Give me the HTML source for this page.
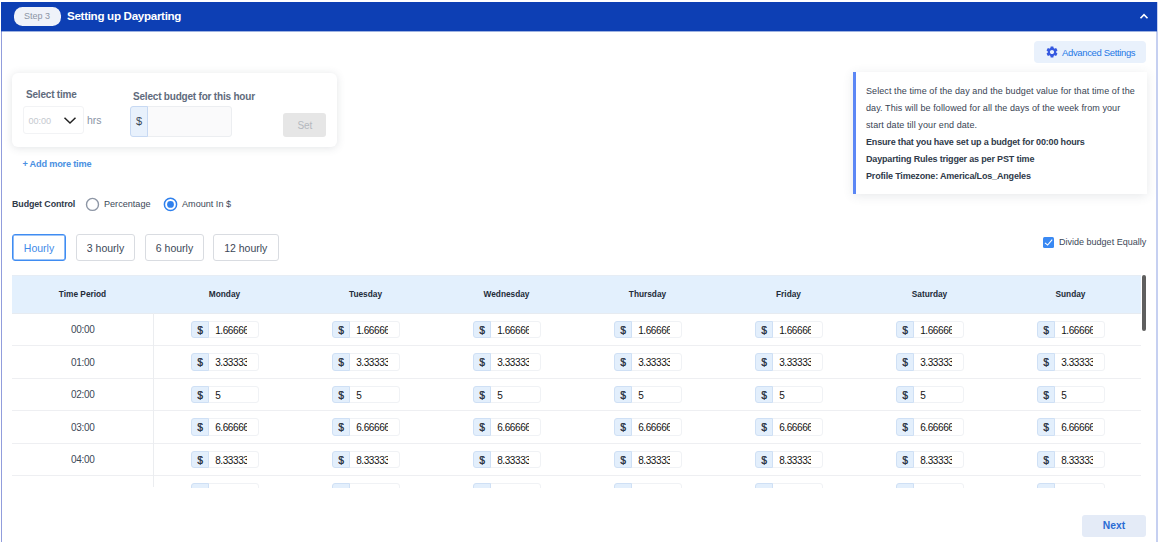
<!DOCTYPE html>
<html><head><meta charset="utf-8"><title>Dayparting</title>
<style>
*{box-sizing:border-box;margin:0;padding:0}
html,body{width:1160px;height:542px;background:#fff;overflow:hidden}
body{font-family:"Liberation Sans","DejaVu Sans",sans-serif;color:#3c4858;position:relative}
.abs{position:absolute;white-space:nowrap}
#frame{left:1px;top:2px;width:1157px;height:560px;border-left:1px solid #919ddc;border-right:2px solid #c6d0f1}
#hdr{left:1px;top:2px;width:1156px;height:29px;background:#0d3fb4;box-shadow:0 1px 0 rgba(13,63,180,.4)}
#step{left:13.5px;top:7px;width:47px;height:18.8px;border-radius:8.5px;background:#eff2f9;color:#8b95a5;font-size:9px;line-height:19px;text-align:center}
#title{left:67px;top:7.3px;font-size:11.6px;font-weight:bold;color:#fff;line-height:18px;letter-spacing:-0.3px}
#adv{left:1034.2px;top:40.8px;width:112px;height:22.6px;border-radius:4px;background:#e9f1fc;color:#2478e6;font-size:9.5px;letter-spacing:-0.35px;line-height:23.8px;padding-left:27.8px}
#card{left:12px;top:73px;width:325px;height:74px;border-radius:6px;background:#fff;box-shadow:0 1px 8px rgba(60,72,88,.15)}
.lbl{font-size:10px;color:#5f6b7c;font-weight:bold;letter-spacing:-0.2px}
#sel{left:23px;top:106px;width:61px;height:28px;border:1px solid #f2f3f5;border-radius:3px;background:#fff}
#selv{left:28.4px;top:114px;font-size:9.1px;color:#c5c9cf;line-height:14px}
#hrs{left:87px;top:113px;font-size:10.5px;color:#8a94a6;line-height:14px}
#dol{left:130px;top:106px;width:18px;height:31px;background:#e8f1fc;border:1px solid #c7d9f3;border-radius:3px 0 0 3px;font-size:11px;color:#3c4858;text-align:center;line-height:29px}
#inp{left:147px;top:106px;width:85px;height:31px;background:#fafafb;border:1px solid #eceef1;border-radius:0 3px 3px 0}
#set{left:283.4px;top:112.7px;width:43px;height:24px;border-radius:3px;background:#e6e6e6;color:#b4b8be;font-size:10px;line-height:25.5px;text-align:center}
#add{left:22.4px;top:157px;font-size:9.2px;color:#4a90e2;line-height:14px;font-weight:bold;letter-spacing:-0.2px}
#info{left:853px;top:72px;width:294px;height:122px;background:#fff;border-left:3px solid #5c87f5;box-shadow:0 2px 10px rgba(60,72,88,.12);padding:11px 0 0 10px;font-size:9px;letter-spacing:0.084px;line-height:17px;color:#384353;white-space:nowrap}
#info b{color:#2f3a4a;letter-spacing:-0.17px}
#bc{left:12px;top:197px;font-size:8.9px;letter-spacing:-0.1px;font-weight:bold;color:#2f3a4a;line-height:14px}
.radio{width:13.4px;height:13.4px;border-radius:50%;border:2px solid #9ca4b1;background:#fff}
.rl{font-size:9.1px;color:#3c4858;line-height:14px}
.tab{top:234px;height:27px;border:1px solid #d9dce1;border-radius:3px;background:#fff;font-size:10.5px;color:#3c4858;text-align:center;line-height:26px}
#t1{border:1px solid #3f8cf2;box-shadow:inset 0 0 0 0.6px #3f8cf2;color:#3f8ae8;line-height:26px}
#dbe{left:1059px;top:235.4px;font-size:9.03px;color:#3c4858;line-height:14px}
#cb{left:1043.2px;top:237px;width:11px;height:10.8px;border-radius:1.5px;background:#3a89f3}
#thead{left:12.2px;top:275px;width:1129px;height:39px;background:#e3f0fd;border-top:1px solid #e6edf5;border-bottom:1px solid #e6ebf1}
.th{top:274.8px;height:38.6px;line-height:38.8px;font-size:8.3px;font-weight:bold;color:#222b38;text-align:center}
#tbody{left:12.2px;top:313.4px;width:1129px;height:174.2px;overflow:hidden}
.row{position:absolute;left:0;width:1129px;height:32.97px;border-bottom:1px solid #eeeff2}
.tm{position:absolute;left:0;width:141px;top:1.1px;height:32px;line-height:32px;text-align:center;font-size:10px;letter-spacing:-0.3px;color:#3c4858}
.c{position:absolute;top:7.6px;height:17.5px}
.d{position:absolute;left:0;top:0;width:18px;height:17.5px;background:#e3effc;border:1px solid #cfe0f5;border-radius:3px 0 0 3px;font-size:10px;line-height:17px;text-align:center;color:#2f3a4a;text-shadow:0.2px 0 0 #2f3a4a}
.v{position:absolute;left:17px;top:0;width:51px;height:17.5px;border:1px solid #f0f2f5;border-radius:0 3px 3px 0;background:#fff}
.v span{position:absolute;left:6.2px;top:0;width:31.4px;height:16px;overflow:hidden;font-size:10px;letter-spacing:-0.4px;line-height:17.8px;color:#151515;white-space:nowrap}
#vline{left:152.9px;top:313.4px;width:1px;height:173.8px;background:#ebedf0}
#sb{left:1142px;top:275px;width:4px;height:55.5px;border-radius:2px;background:#5f5f5f}
#next{left:1081.6px;top:515px;width:64.7px;height:22px;border-radius:3px;background:#e4ebf7;color:#2b6cd4;font-size:10.3px;font-weight:bold;line-height:22.5px;text-align:center}
</style></head><body>
<div class="abs" id="frame"></div>
<div class="abs" id="hdr"></div>
<div class="abs" id="step">Step 3</div>
<div class="abs" id="title">Setting up Dayparting</div>
<svg class="abs" style="left:1138.8px;top:12.3px" width="10" height="8" viewBox="0 0 10 8"><path d="M1.5 6.2 L5 2.6 L8.5 6.2" fill="none" stroke="#fff" stroke-width="1.6"/></svg>
<div class="abs" id="adv">Advanced Settings</div>
<svg class="abs" id="gear" style="left:1045px;top:45.2px" width="14" height="14" viewBox="0 0 24 24"><path fill="#3558e0" d="M19.14 12.94c.04-.3.06-.61.06-.94 0-.32-.02-.64-.07-.94l2.03-1.58a.49.49 0 0 0 .12-.61l-1.92-3.32a.488.488 0 0 0-.59-.22l-2.39.96c-.5-.38-1.03-.7-1.62-.94l-.36-2.54a.484.484 0 0 0-.48-.41h-3.84c-.24 0-.43.17-.47.41l-.36 2.54c-.59.24-1.13.57-1.62.94l-2.39-.96c-.22-.08-.47 0-.59.22L2.74 8.87c-.12.21-.08.47.12.61l2.03 1.58c-.05.3-.09.63-.09.94s.02.64.07.94l-2.03 1.58a.49.49 0 0 0-.12.61l1.92 3.32c.12.22.37.29.59.22l2.39-.96c.5.38 1.03.7 1.62.94l.36 2.54c.05.24.24.41.48.41h3.84c.24 0 .44-.17.47-.41l.36-2.54c.59-.24 1.13-.56 1.62-.94l2.39.96c.22.08.47 0 .59-.22l1.92-3.32c.12-.22.07-.47-.12-.61l-2.01-1.58zM12 15.6c-1.98 0-3.6-1.62-3.6-3.6s1.62-3.600 3.6-3.600 3.600 1.620 3.600 3.600-1.620 3.600-3.600 3.600z"/></svg>
<div class="abs" id="card"></div>
<div class="abs lbl" style="left:26px;top:87.5px;line-height:14px">Select time</div>
<div class="abs lbl" style="left:133px;top:89.5px;line-height:14px">Select budget for this hour</div>
<div class="abs" id="sel"></div><div class="abs" id="selv">00:00</div>
<svg class="abs" style="left:63px;top:116px" width="14" height="9" viewBox="0 0 14 9"><path d="M1.5 1.8 L7 7 L12.5 1.8" fill="none" stroke="#222" stroke-width="1.5"/></svg>
<div class="abs" id="hrs">hrs</div>
<div class="abs" id="inp"></div><div class="abs" id="dol">$</div>
<div class="abs" id="set">Set</div>
<div class="abs" id="add">+ Add more time</div>
<div class="abs" id="info">Select the time of the day and the budget value for that time of the<br>day. This will be followed for all the days of the week from your<br>start date till your end date.<br><b>Ensure that you have set up a budget for 00:00 hours</b><br><b>Dayparting Rules trigger as per PST time</b><br><b>Profile Timezone: America/Los_Angeles</b></div>
<div class="abs" id="bc">Budget Control</div>
<svg class="abs" style="left:85px;top:197px" width="15" height="15" viewBox="0 0 15 15"><circle cx="7.5" cy="7.4" r="6" fill="#fff" stroke="#8d96a5" stroke-width="1.4"/></svg><div class="abs rl" style="left:104px;top:197px">Percentage</div>
<svg class="abs" style="left:162.5px;top:197px" width="15" height="15" viewBox="0 0 15 15"><circle cx="7.5" cy="7.4" r="6.1" fill="#fff" stroke="#2f80ed" stroke-width="1.5"/><circle cx="7.5" cy="7.4" r="3.4" fill="#2f80ed"/></svg><div class="abs rl" style="left:182px;top:197px">Amount In $</div>
<div class="abs tab" id="t1" style="left:12px;width:54px">Hourly</div>
<div class="abs tab" style="left:76px;width:59px">3 hourly</div>
<div class="abs tab" style="left:145px;width:59px">6 hourly</div>
<div class="abs tab" style="left:213px;width:65.5px">12 hourly</div>
<div class="abs" id="cb"></div><svg class="abs" style="left:1043.2px;top:237px" width="11" height="11" viewBox="0 0 11 11"><path d="M1.9 5.9 L4.6 8 L9.2 2.6" fill="none" stroke="#fff" stroke-width="1.1"/></svg>
<div class="abs" id="dbe">Divide budget Equally</div>
<div class="abs" id="thead"></div>
<div class="abs th" style="left:12px;width:141px">Time Period</div>
<div class="abs th" style="left:154px;width:141px">Monday</div>
<div class="abs th" style="left:295px;width:141px">Tuesday</div>
<div class="abs th" style="left:436px;width:141px">Wednesday</div>
<div class="abs th" style="left:577px;width:141px">Thursday</div>
<div class="abs th" style="left:718px;width:141px">Friday</div>
<div class="abs th" style="left:859px;width:141px">Saturday</div>
<div class="abs th" style="left:1000px;width:141px">Sunday</div>
<div class="abs" id="tbody">
<div class="row" style="top:0.0px"><div class="tm">00:00</div>
<div class="c" style="left:178.8px"><div class="v"><span>1.6666666667</span></div><div class="d">$</div></div>
<div class="c" style="left:319.8px"><div class="v"><span>1.6666666667</span></div><div class="d">$</div></div>
<div class="c" style="left:460.8px"><div class="v"><span>1.6666666667</span></div><div class="d">$</div></div>
<div class="c" style="left:601.8px"><div class="v"><span>1.6666666667</span></div><div class="d">$</div></div>
<div class="c" style="left:742.8px"><div class="v"><span>1.6666666667</span></div><div class="d">$</div></div>
<div class="c" style="left:883.8px"><div class="v"><span>1.6666666667</span></div><div class="d">$</div></div>
<div class="c" style="left:1024.8px"><div class="v"><span>1.6666666667</span></div><div class="d">$</div></div>
</div>
<div class="row" style="top:32.47px"><div class="tm">01:00</div>
<div class="c" style="left:178.8px"><div class="v"><span>3.3333333333</span></div><div class="d">$</div></div>
<div class="c" style="left:319.8px"><div class="v"><span>3.3333333333</span></div><div class="d">$</div></div>
<div class="c" style="left:460.8px"><div class="v"><span>3.3333333333</span></div><div class="d">$</div></div>
<div class="c" style="left:601.8px"><div class="v"><span>3.3333333333</span></div><div class="d">$</div></div>
<div class="c" style="left:742.8px"><div class="v"><span>3.3333333333</span></div><div class="d">$</div></div>
<div class="c" style="left:883.8px"><div class="v"><span>3.3333333333</span></div><div class="d">$</div></div>
<div class="c" style="left:1024.8px"><div class="v"><span>3.3333333333</span></div><div class="d">$</div></div>
</div>
<div class="row" style="top:64.94px"><div class="tm">02:00</div>
<div class="c" style="left:178.8px"><div class="v"><span>5</span></div><div class="d">$</div></div>
<div class="c" style="left:319.8px"><div class="v"><span>5</span></div><div class="d">$</div></div>
<div class="c" style="left:460.8px"><div class="v"><span>5</span></div><div class="d">$</div></div>
<div class="c" style="left:601.8px"><div class="v"><span>5</span></div><div class="d">$</div></div>
<div class="c" style="left:742.8px"><div class="v"><span>5</span></div><div class="d">$</div></div>
<div class="c" style="left:883.8px"><div class="v"><span>5</span></div><div class="d">$</div></div>
<div class="c" style="left:1024.8px"><div class="v"><span>5</span></div><div class="d">$</div></div>
</div>
<div class="row" style="top:97.41px"><div class="tm">03:00</div>
<div class="c" style="left:178.8px"><div class="v"><span>6.6666666667</span></div><div class="d">$</div></div>
<div class="c" style="left:319.8px"><div class="v"><span>6.6666666667</span></div><div class="d">$</div></div>
<div class="c" style="left:460.8px"><div class="v"><span>6.6666666667</span></div><div class="d">$</div></div>
<div class="c" style="left:601.8px"><div class="v"><span>6.6666666667</span></div><div class="d">$</div></div>
<div class="c" style="left:742.8px"><div class="v"><span>6.6666666667</span></div><div class="d">$</div></div>
<div class="c" style="left:883.8px"><div class="v"><span>6.6666666667</span></div><div class="d">$</div></div>
<div class="c" style="left:1024.8px"><div class="v"><span>6.6666666667</span></div><div class="d">$</div></div>
</div>
<div class="row" style="top:129.88px"><div class="tm">04:00</div>
<div class="c" style="left:178.8px"><div class="v"><span>8.3333333333</span></div><div class="d">$</div></div>
<div class="c" style="left:319.8px"><div class="v"><span>8.3333333333</span></div><div class="d">$</div></div>
<div class="c" style="left:460.8px"><div class="v"><span>8.3333333333</span></div><div class="d">$</div></div>
<div class="c" style="left:601.8px"><div class="v"><span>8.3333333333</span></div><div class="d">$</div></div>
<div class="c" style="left:742.8px"><div class="v"><span>8.3333333333</span></div><div class="d">$</div></div>
<div class="c" style="left:883.8px"><div class="v"><span>8.3333333333</span></div><div class="d">$</div></div>
<div class="c" style="left:1024.8px"><div class="v"><span>8.3333333333</span></div><div class="d">$</div></div>
</div>
<div class="row" style="top:162.35px"><div class="tm"></div>
<div class="c" style="left:178.8px"><div class="v"><span></span></div><div class="d"></div></div>
<div class="c" style="left:319.8px"><div class="v"><span></span></div><div class="d"></div></div>
<div class="c" style="left:460.8px"><div class="v"><span></span></div><div class="d"></div></div>
<div class="c" style="left:601.8px"><div class="v"><span></span></div><div class="d"></div></div>
<div class="c" style="left:742.8px"><div class="v"><span></span></div><div class="d"></div></div>
<div class="c" style="left:883.8px"><div class="v"><span></span></div><div class="d"></div></div>
<div class="c" style="left:1024.8px"><div class="v"><span></span></div><div class="d"></div></div>
</div>
</div>
<div class="abs" id="vline"></div>
<div class="abs" id="sb"></div>
<div class="abs" id="next">Next</div>
</body></html>
